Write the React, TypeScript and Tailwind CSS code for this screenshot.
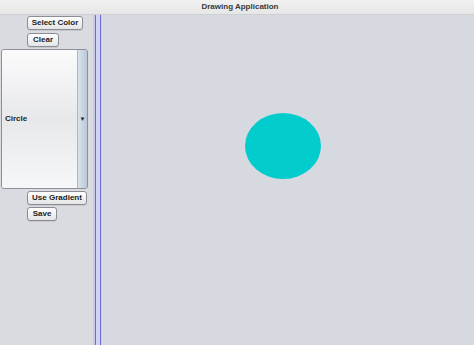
const Button = ({ label, width }: { label: string; width: string }) => {
  return (
    <button
      className={`${width} h-[14px] ml-[27px] px-0 whitespace-nowrap rounded-[3px] border border-[#8a8d93] bg-gradient-to-b from-[#ffffff] to-[#e4e4e6] text-[8px] font-bold text-[#222222] leading-none shadow-[0_1px_0_rgba(0,0,0,0.08)]`}
    >
      {label}
    </button>
  );
};

export default function App() {
  return (
    <div
      className="w-[474px] h-[345px] flex flex-col bg-[#d8dadf] overflow-hidden"
      style={{ fontFamily: '"Liberation Sans", Arial, sans-serif' }}
    >
      <div className="h-[15px] flex items-center justify-center bg-gradient-to-b from-[#f1f1f1] to-[#e6e6e6] border-b border-[#cfd0d3]">
        <span className="text-[8px] font-bold text-[#3a3a3a] ml-[6px] whitespace-nowrap">Drawing Application</span>
      </div>

      <div className="flex-1 flex">
        <div className="w-[93px] flex flex-col pt-[1px] bg-[#d9dbe0]">
          <Button label="Select Color" width="w-[56px]" />
          <div className="h-[3px]" />
          <Button label="Clear" width="w-[32px]" />
          <div className="h-[2px]" />

          <div className="ml-[1px] w-[87px] h-[140px] flex rounded-[3px] border border-[#8d9096] overflow-hidden">
            <div className="flex-1 flex items-center bg-gradient-to-b from-[#fbfbfc] via-[#e7e8ea] to-[#f6f7f9] pl-[3px]">
              <span className="text-[8px] font-bold text-[#222222]">Circle</span>
            </div>
            <div className="w-[10px] flex items-center justify-center border-l border-[#a9b6c4] bg-gradient-to-r from-[#dae3ec] to-[#b8c8d8]">
              <span className="text-[6px] text-[#1e1e1e] leading-none">▼</span>
            </div>
          </div>

          <div className="h-[2px]" />
          <Button label="Use Gradient" width="w-[60px]" />
          <div className="h-[2px]" />
          <Button label="Save" width="w-[30px]" />
        </div>

        <div className="w-[2px] bg-[#c9c9ea]" />
        <div className="w-[1px] bg-[#6e6cd2]" />
        <div className="w-[4px] bg-[#d3d3f5]" />
        <div className="w-[1px] bg-[#6e6cd2]" />
        <div className="w-[1px] bg-[#cfd0ee]" />

        <div className="flex-1 relative bg-[#d6d9e0]">
          <div className="absolute left-[143px] top-[98px] w-[76px] h-[66px] rounded-[50%] bg-[#02cccc]" />
        </div>
      </div>
    </div>
  );
}
